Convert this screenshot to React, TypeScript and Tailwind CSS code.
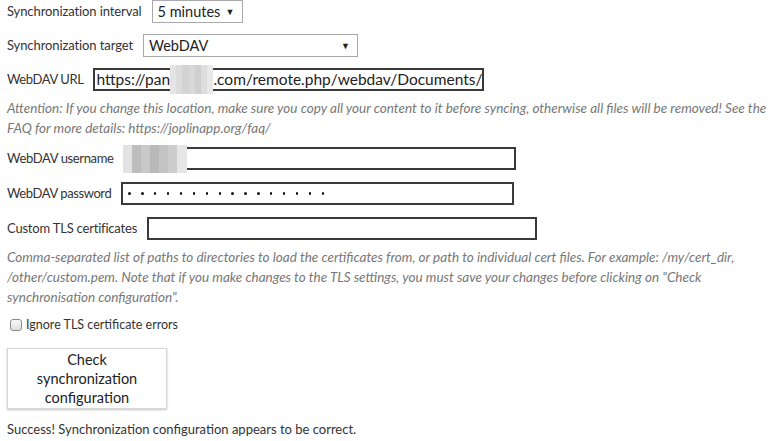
import React from "react";

const FONT = "font-['Lato','Liberation_Sans',sans-serif]";

// pixelated grey block standing in for redacted text
function Blur({ className, cells }: { className: string; cells: string[] }) {
  return (
    <span className={`inline-flex align-middle ${className}`}>
      {cells.map((c, i) => (
        <span key={i} className="flex-1 h-full" style={{ backgroundColor: c }} />
      ))}
    </span>
  );
}

function SelectBox({ value, width }: { value: string; width: string }) {
  return (
    <div
      className={`${width} h-[23px] border border-[#a9a9a9] bg-white flex items-center justify-between pl-[5px] pr-[7px] text-[14.5px] text-[#222]`}
    >
      <span>{value}</span>
      <span className="text-[9px] text-[#222]">▼</span>
    </div>
  );
}

function Row({
  label,
  children,
  className = "",
  labelClass = "",
}: {
  label: string;
  children: React.ReactNode;
  className?: string;
  labelClass?: string;
}) {
  return (
    <div className={`flex items-center gap-[10px] ${className}`}>
      <label className={`text-[13px] text-[#333] ${labelClass}`}>{label}</label>
      {children}
    </div>
  );
}

export default function App() {
  return (
    <div className={`${FONT} w-[783px] h-[441px] bg-white px-[7px] overflow-hidden`}>
      <Row label="Synchronization interval" className="h-[23px]" labelClass="tracking-[-0.1px]">
        <SelectBox value="5 minutes" width="w-[91px]" />
      </Row>

      <Row label="Synchronization target" className="h-[23px] mt-[11px]" labelClass="tracking-[-0.1px]">
        <SelectBox value="WebDAV" width="w-[215px]" />
      </Row>

      <Row label="WebDAV URL" className="h-[23px] mt-[11px]" labelClass="tracking-[-0.4px]">
        <div className="w-[391px] h-[23px] border-2 border-[#3a3a3a] flex items-center pl-[1px] text-[15.5px] text-[#222] whitespace-nowrap overflow-visible">
          https://pan
          <Blur
            className="w-[72px] h-[29px]"
            cells={["#e4e4e4", "#dcdcdc", "#d3d3d3", "#d8d8d8", "#cfcfcf", "#dedede", "#e8e8e8"]}
          />
          .com/remote.php/webdav/Documents/
        </div>
      </Row>

      <p className="mt-[7px] text-[13.5px] italic text-[#777] leading-[20px] w-[770px]">
        Attention: If you change this location, make sure you copy all your content to it before syncing, otherwise all
        files will be removed! See the FAQ for more details: https://joplinapp.org/faq/
      </p>

      <Row label="WebDAV username" className="h-[23px] mt-[9px]" labelClass="tracking-[-0.35px]">
        <div className="relative w-[392px] h-[23px] border-2 border-[#3a3a3a]">
          <Blur
            className="absolute left-[-3px] top-[-4px] w-[64px] h-[28px]"
            cells={["#e2e2e2", "#bdbdbd", "#c9c9c9", "#b9b9b9", "#c4c4c4", "#cdcdcd", "#e6e6e6"]}
          />
        </div>
      </Row>

      <Row label="WebDAV password" className="h-[23px] mt-[12px]" labelClass="tracking-[-0.4px]">
        <div className="w-[393px] h-[23px] border-2 border-[#3a3a3a] flex items-center pl-[5px] gap-[10.6px]">
          {Array.from({ length: 16 }).map((_, i) => (
            <span key={i} className="w-[2.3px] h-[2.3px] rounded-full bg-[#111]" />
          ))}
        </div>
      </Row>

      <Row label="Custom TLS certificates" className="h-[23px] mt-[12px]" labelClass="tracking-[-0.2px]">
        <div className="w-[390px] h-[23px] border-2 border-[#3a3a3a]" />
      </Row>

      <p className="mt-[7px] text-[13.5px] italic text-[#777] leading-[20px] w-[770px]">
        Comma-separated list of paths to directories to load the certificates from, or path to individual cert files.
        For example: /my/cert_dir, /other/custom.pem. Note that if you make changes to the TLS settings, you must save
        your changes before clicking on "Check synchronisation configuration".
      </p>

      <div className="mt-[8px] h-[20px] flex items-center gap-[4px] pl-[3px]">
        <span className="w-[12px] h-[12px] rounded-[3px] border border-[#8a8a8a] bg-[linear-gradient(#fafafa,#dedede)]" />
        <span className="text-[12.5px] text-[#333]">Ignore TLS certificate errors</span>
      </div>

      <button className="block mt-[13px] w-[160px] h-[61px] border border-[#d8d8d8] bg-white shadow-[0_1px_2px_rgba(0,0,0,0.25)] text-[14.5px] leading-[19px] text-[#222] px-2">
        Check synchronization configuration
      </button>

      <p className="mt-[11px] text-[13px] text-[#333]">Success! Synchronization configuration appears to be correct.</p>
    </div>
  );
}
